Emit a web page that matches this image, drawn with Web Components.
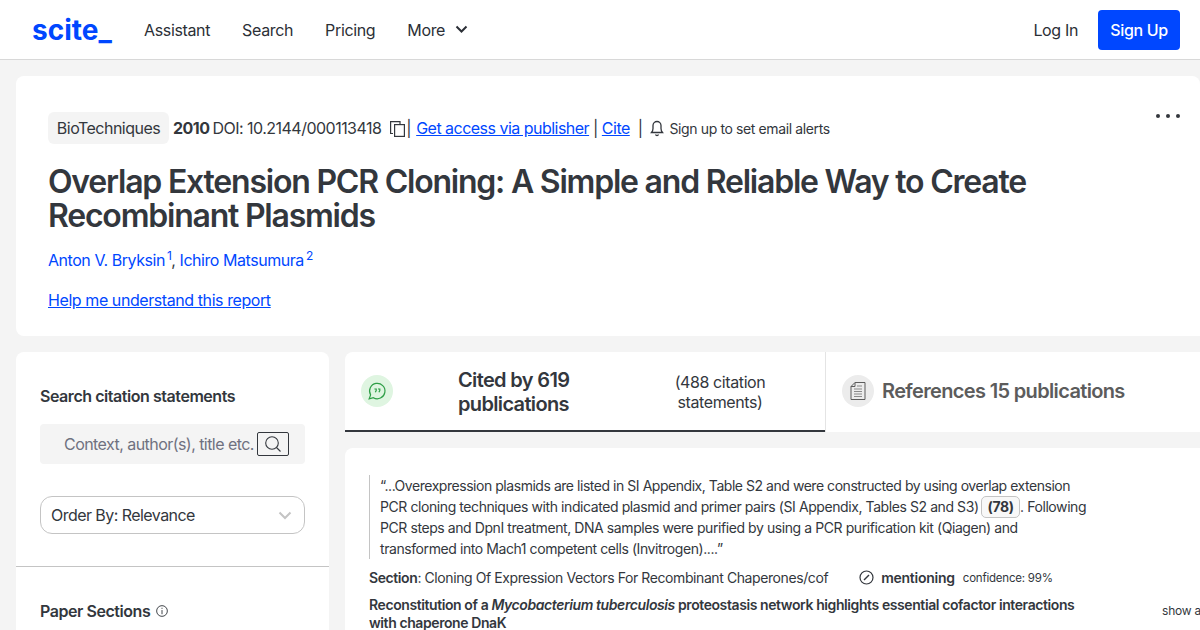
<!DOCTYPE html>
<html lang="en">
<head>
<meta charset="utf-8">
<title>Overlap Extension PCR Cloning</title>
<style>
    html, body { margin: 0; height: 630px; overflow: hidden; background: #f4f4f4; }
    body { font-family: "Inter", "Liberation Sans", sans-serif; color: #33373d; }
    .content { display: grid; grid-template-columns: 313px 855px; column-gap: 16px; row-gap: 16px; padding: 16px 0 0 16px; width: 1200px; box-sizing: border-box; }
    paper-header { grid-column: 1 / 3; }
    .right { display: flex; flex-direction: column; gap: 16px; min-width: 0; }
</style>
</head>
<body>
<site-nav></site-nav>
<div class="content">
    <paper-header></paper-header>
    <citation-sidebar></citation-sidebar>
    <div class="right">
        <citation-tabs></citation-tabs>
        <citation-card></citation-card>
    </div>
</div>
<script>
(function() {
    const navTemplate = document.createElement('template');
    navTemplate.innerHTML = `
        <style>
            :host { display: flex; align-items: center; height: 59px; padding: 0 20px 0 32px; background: #fff; border-bottom: 1px solid #d8d8d8; font-size: 16px; color: #2b2f36; letter-spacing: -0.35px; }
            .logo { font-size: 28px; font-weight: 700; color: #0047ff; letter-spacing: 0; width: 112px; line-height: 60px; }
            nav { display: flex; gap: 32px; align-items: center; }
            .more { display: flex; align-items: center; gap: 10px; }
            .right { margin-left: auto; display: flex; align-items: center; gap: 20px; }
            .signup { background: #0047ff; color: #fff; font-weight: 500; height: 40px; width: 82px; border-radius: 4px; display: flex; align-items: center; justify-content: center; }
        </style>
        <div class="logo">scite_</div>
        <nav>
            <span>Assistant</span><span>Search</span><span>Pricing</span>
            <span class="more">More
                <svg width="13" height="9" viewBox="0 0 13 9" fill="none" stroke="#2b2f36" stroke-width="2"><path d="M1.5 1.5 6.5 6.5 11.5 1.5"/></svg>
            </span>
        </nav>
        <div class="right"><span>Log In</span><span class="signup">Sign Up</span></div>
    `;
    class SiteNav extends HTMLElement {
        constructor() {
            super();
            this.attachShadow({ mode: "open" }).appendChild(navTemplate.content.cloneNode(true));
        }
    }
    customElements.define('site-nav', SiteNav);

    const headerTemplate = document.createElement('template');
    headerTemplate.innerHTML = `
        <style>
            :host { display: block; position: relative; background: #fff; border-radius: 8px 8px 0 8px; height: 260px; box-sizing: border-box; padding: 36px 32px 0; }
            a { color: #0047ff; text-decoration: underline; }
            .meta { display: flex; align-items: center; height: 32px; font-size: 16px; letter-spacing: -0.52px; white-space: pre; }
            .journal { background: #f4f4f4; border-radius: 6px; height: 32px; width: 121px; display: flex; align-items: center; justify-content: center; margin-right: 4px; }
            b { font-weight: 700; margin-right: 3px; }
            .copy { margin: 0 0 0 8px; display: block; }
            .alert { font-size: 14px; letter-spacing: -0.38px; }
            .sep { margin: 0 5px 0 0; }
            .bell { margin: 0 4px 0 -1px; }
            h1 { margin: 21px 0 0; font-size: 32px; line-height: 34px; font-weight: 600; letter-spacing: -1.22px; color: #33373d; width: 1010px; }
            .authors { margin-top: 15px; font-size: 16px; letter-spacing: -0.45px; line-height: 24px; color: #33373d; }
            .authors a { text-decoration: none; }
            sup { font-size: 12px; line-height: 0; margin-left: 2px; }
            sup.a { color: #0047ff; }
            .help { display: block; margin-top: 16px; font-size: 16px; line-height: 24px; letter-spacing: -0.42px; }
            .dots { position: absolute; top: 38px; right: 20px; display: flex; gap: 6px; }
            .dots i { width: 4px; height: 4px; border-radius: 50%; background: #33373d; }
        </style>
        <div class="meta"><span class="journal">BioTechniques</span><b>2010</b><span>DOI: 10.2144/000113418</span>
            <svg class="copy" width="17" height="17" viewBox="0 0 17 17" fill="none" stroke="#33373d" stroke-width="1.2"><path d="M4 13.5H1.6V1.6H11V4"/><rect x="5.6" y="4.6" width="9.8" height="11.8"/></svg><span class="sep">|</span><a>Get access via publisher</a><span> | </span><a>Cite</a><span>  |  </span>
            <svg class="bell" width="16" height="18" viewBox="0 0 16 18" fill="none" stroke="#33373d" stroke-width="1.3"><path d="M2.500 13.500c1-1.200 1.500-2.200 1.500-4V6.500a4 4 0 0 1 8 0v3c0 1.800.5 2.800 1.500 4z"/><path d="M6.500 15.500a1.600 1.600 0 0 0 3 0"/></svg><span class="alert">Sign up to set email alerts</span></div>
        <h1>Overlap Extension PCR Cloning: A Simple and Reliable Way to Create Recombinant Plasmids</h1>
        <div class="authors"><a>Anton V. Bryksin</a><sup class="a">1</sup>, <a>Ichiro Matsumura</a><sup class="a">2</sup></div>
        <a class="help">Help me understand this report</a>
        <div class="dots"><i></i><i></i><i></i></div>
    `;
    class PaperHeader extends HTMLElement {
        constructor() {
            super();
            this.attachShadow({ mode: "open" }).appendChild(headerTemplate.content.cloneNode(true));
        }
    }
    customElements.define('paper-header', PaperHeader);

    const sidebarTemplate = document.createElement('template');
    sidebarTemplate.innerHTML = `
        <style>
            :host { display: block; background: #fff; border-radius: 8px 8px 0 0; height: 278px; overflow: hidden; }
            .top { padding: 32px 24px; border-bottom: 1px solid #c4c4c4; }
            h3 { margin: 0; font-size: 16px; line-height: 24px; font-weight: 600; letter-spacing: -0.45px; color: #33373d; }
            .search { margin-top: 16px; height: 40px; background: #f4f4f4; border-radius: 4px; display: flex; align-items: center; padding-left: 24px; box-sizing: border-box; font-size: 16px; letter-spacing: -0.55px; color: #6f7180; gap: 3px; }
            .go { width: 32px; height: 24px; border: 1px solid #33373d; border-radius: 2px; box-sizing: border-box; display: flex; align-items: center; justify-content: center; }
            .order { margin-top: 32px; height: 38px; box-sizing: border-box; border: 1px solid #c4c4c4; border-radius: 12px; display: flex; align-items: center; justify-content: space-between; padding: 0 12px 0 10px; font-size: 16px; letter-spacing: -0.55px; color: #33373d; }
            .sections { padding: 32px 24px 0; display: flex; align-items: center; gap: 6px; }
        </style>
        <div class="top">
            <h3>Search citation statements</h3>
            <div class="search"><span>Context, author(s), title etc.</span>
                <span class="go"><svg width="18" height="18" viewBox="0 0 18 18" fill="none" stroke="#33373d" stroke-width="1.100"><circle cx="8" cy="8" r="6.300"/><path d="M12.500 12.500 16.500 16.500"/></svg></span>
            </div>
            <div class="order"><span>Order By: Relevance</span>
                <svg width="14" height="9" viewBox="0 0 14 9" fill="none" stroke="#c4c4c4" stroke-width="2"><path d="M1.500 1.500 7 7 12.500 1.500"/></svg>
            </div>
        </div>
        <div class="sections"><h3>Paper Sections</h3>
            <svg width="12" height="12" viewBox="0 0 13 13" fill="none" stroke="#33373d"><circle cx="6.500" cy="6.500" r="5.800"/><path d="M6.500 5.500V10M6.500 3V4.200"/></svg>
        </div>
    `;
    class CitationSidebar extends HTMLElement {
        constructor() {
            super();
            this.attachShadow({ mode: "open" }).appendChild(sidebarTemplate.content.cloneNode(true));
        }
    }
    customElements.define('citation-sidebar', CitationSidebar);

    const tabsTemplate = document.createElement('template');
    tabsTemplate.innerHTML = `
        <style>
            :host { display: flex; height: 80px; background: #fff; border-radius: 8px 0 0 0; }
            .tab { box-sizing: border-box; height: 80px; display: flex; align-items: center; }
            .cited { width: 481px; border-bottom: 2px solid #33373d; padding: 2px 0 0 16px; }
            .refs { flex: 1; border-left: 1px solid #e4e4e4; padding: 0 0 2px 16px; margin-left: -1px; font-size: 20px; font-weight: 600; letter-spacing: -0.65px; color: #5c5c5c; gap: 8px; }
            .icon { width: 32px; height: 32px; border-radius: 50%; display: flex; align-items: center; justify-content: center; flex: none; }
            .cited .icon { margin-top: -2px; }
            .green { background: #dff5e1; }
            .grey { background: #ececec; }
            .title { margin-left: 65px; width: 150px; font-size: 20px; line-height: 24px; font-weight: 600; letter-spacing: -0.65px; }
            .sub { width: 140px; margin-left: 42px; text-align: center; font-size: 16px; line-height: 20px; letter-spacing: -0.4px; }
        </style>
        <div class="tab cited">
            <span class="icon green"><svg width="20" height="20" viewBox="0 0 20 20" fill="none" stroke="#2e9e46" stroke-width="1.200"><path d="M2.200 17.800 3.600 13.900A7.700 7.700 0 1 1 6.400 16.700z"/><path d="M7.400 8h1.800v1.500L8.300 11.300M11 8h1.800v1.500l-.9 1.800"/></svg></span>
            <span class="title">Cited by 619 publications</span>
            <span class="sub">(488 citation statements)</span>
        </div>
        <div class="tab refs">
            <span class="icon grey"><svg width="18" height="20" viewBox="0 0 18 20" fill="none" stroke="#5c5c5c" stroke-width="1"><path d="M6 1.500H16V18.500H2V5.500z M6 1.500V5.500H2"/><path d="M8 5h5M5 8h8M5 10.500h8M5 13h8M5 15.500h8" stroke="#8a8a8a" stroke-width="1.200"/></svg></span>
            <span>References 15 publications</span>
        </div>
    `;
    class CitationTabs extends HTMLElement {
        constructor() {
            super();
            this.attachShadow({ mode: "open" }).appendChild(tabsTemplate.content.cloneNode(true));
        }
    }
    customElements.define('citation-tabs', CitationTabs);

    const cardTemplate = document.createElement('template');
    cardTemplate.innerHTML = `
        <style>
            :host { display: block; position: relative; background: #fff; border-radius: 8px 0 0 0; height: 182px; padding: 27px 0 0 24px; box-sizing: border-box; overflow: hidden; color: #33373d; }
            blockquote { margin: 0; border-left: 1px solid #c4c4c4; padding-left: 10px; font-size: 14px; line-height: 21px; letter-spacing: -0.42px; width: 710px; height: 84px; white-space: pre; }
            .first { letter-spacing: -0.46px; }
            .cite { display: inline-block; font-weight: 700; border: 1px solid #c4c4c4; background: #f8f8f8; border-radius: 5px; padding: 0 5.5px; margin: -1px 0 -1px -1px; line-height: 20px; }
            .row { display: flex; align-items: center; height: 21px; margin-top: 8px; font-size: 14px; letter-spacing: -0.41px; }
            .row b { font-weight: 600; }
            .tally { display: flex; align-items: center; margin-left: 31px; gap: 7px; }
            .tally b { letter-spacing: -0.25px; }
            .conf { font-size: 11.500px; letter-spacing: -0.22px; margin-left: 1px; }
            .paper { margin: 8px 0 0; font-size: 14px; line-height: 18px; font-weight: 600; letter-spacing: -0.41px; white-space: pre; }
            .show { position: absolute; left: 817px; top: 155px; font-size: 12px; letter-spacing: -0.2px; white-space: pre; }
        </style>
        <blockquote><span class="first">“...Overexpression plasmids are listed in SI Appendix, Table S2 and were constructed by using overlap extension</span>
PCR cloning techniques with indicated plasmid and primer pairs (SI Appendix, Tables S2 and S3) <span class="cite">(78)</span>. Following
PCR steps and DpnI treatment, DNA samples were purified by using a PCR purification kit (Qiagen) and
transformed into Mach1 competent cells (Invitrogen)....”</blockquote>
        <div class="row"><span><b>Section</b>: Cloning Of Expression Vectors For Recombinant Chaperones/cof</span>
            <span class="tally">
                <svg width="15" height="15" viewBox="0 0 15 15" fill="none" stroke="#33373d" stroke-width="1.200"><circle cx="7.500" cy="7.500" r="6.500"/><path d="M10 5 5 10" stroke-width="1.500"/></svg>
                <b>mentioning</b><span class="conf">confidence: 99%</span>
            </span>
        </div>
        <div class="paper">Reconstitution of a <i>Mycobacterium tuberculosis</i> proteostasis network highlights essential cofactor interactions
with chaperone DnaK</div>
        <span class="show">show all</span>
    `;
    class CitationCard extends HTMLElement {
        constructor() {
            super();
            this.attachShadow({ mode: "open" }).appendChild(cardTemplate.content.cloneNode(true));
        }
    }
    customElements.define('citation-card', CitationCard);
})();
</script>
</body>
</html>
